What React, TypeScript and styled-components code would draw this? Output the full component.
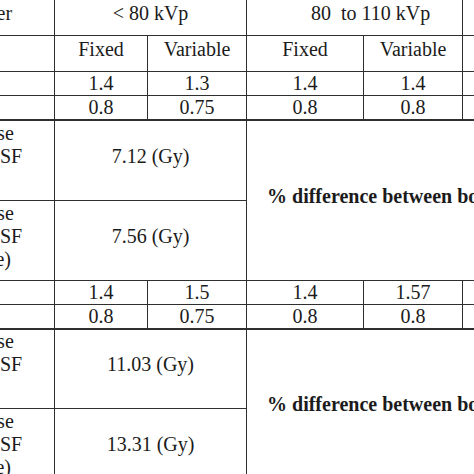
import React from 'react';
import styled, { createGlobalStyle } from 'styled-components';

const GlobalStyle = createGlobalStyle`
  html, body {
    margin: 0;
    padding: 0;
    background: #ffffff;
    overflow: hidden;
  }
`;

const Frame = styled.div`
  width: 474px;
  height: 474px;
  overflow: hidden;
  background: #ffffff;
`;

const Table = styled.table`
  border-collapse: collapse;
  table-layout: fixed;
  width: 736px;
  margin: -1px 0 0 -76px;
  font-family: "Liberation Serif", "Times New Roman", serif;
  font-size: 20px;
  color: #1b1b1b;
`;

const Cell = styled.td<{
  $h: number;
  $pb?: number;
  $top?: number;
  $align?: 'left' | 'center';
  $indent?: number;
  $bold?: boolean;
}>`
  border: 1px solid #2f2f2f;
  border-top-width: ${(p) => p.$top ?? 1}px;
  height: ${(p) => p.$h}px;
  box-sizing: border-box;
  padding: 0 0 ${(p) => p.$pb ?? 0}px ${(p) => p.$indent ?? 0}px;
  text-align: ${(p) => p.$align ?? 'center'};
  vertical-align: middle;
  line-height: 23px;
  white-space: pre;
  font-weight: ${(p) => (p.$bold ? 700 : 400)};
  overflow: hidden;
`;

const widths = [130, 93, 99, 117, 99, 99, 99];

const valueRows = [
  { label: 'α', h: 24, values: ['1.4', '1.3', '1.4', '1.4', '1.4', '1.5'] },
  { label: 'β', h: 23, values: ['0.8', '0.75', '0.8', '0.8', '0.8', '0.75'] },
];

const valueRows2 = [
  { label: 'α', h: 24, values: ['1.4', '1.5', '1.4', '1.57', '1.4', '1.6'] },
  { label: 'β', h: 24, values: ['0.8', '0.75', '0.8', '0.8', '0.8', '0.75'] },
];

const DIFF = '% difference between both techniques';

const Block: React.FC<{
  rows: typeof valueRows;
  fixedDose: string;
  variableDose: string;
  first?: boolean;
}> = ({ rows, fixedDose, variableDose }) => (
  <>
    {rows.map((r, i) => (
      <tr key={i}>
        <Cell $h={r.h} $align="left" $indent={6}>{r.label}</Cell>
        {r.values.map((v, j) => (
          <Cell key={j} $h={r.h}>{v}</Cell>
        ))}
      </tr>
    ))}
    <tr>
      <Cell $h={80} $pb={8} $top={2} $align="left" $indent={6}>
        {'Skin Dose\nby the GSF\n(Fixed)'}
      </Cell>
      <Cell $h={80} $pb={8} $top={2} colSpan={2}>{fixedDose}</Cell>
      <Cell $h={160} $pb={8} $top={2} colSpan={4} rowSpan={2} $align="left" $indent={20} $bold>
        {DIFF}
      </Cell>
    </tr>
    <tr>
      <Cell $h={80} $pb={8} $align="left" $indent={6}>
        {'Skin Dose\nby the GSF\n(Variable)'}
      </Cell>
      <Cell $h={80} $pb={8} colSpan={2}>{variableDose}</Cell>
    </tr>
  </>
);

export default function App() {
  return (
    <Frame>
      <GlobalStyle />
      <Table>
        <colgroup>
          {widths.map((w, i) => (
            <col key={i} style={{ width: w }} />
          ))}
        </colgroup>
        <tbody>
          <tr>
            <Cell $h={36} $pb={8} $align="left" $indent={6}>Parameter</Cell>
            <Cell $h={36} $pb={8} colSpan={2}>{'< 80 kVp'}</Cell>
            <Cell $h={36} $pb={8} colSpan={2} $indent={32}>{'80  to 110 kVp'}</Cell>
            <Cell $h={36} $pb={8} colSpan={2}>{'> 110 kVp'}</Cell>
          </tr>
          <tr>
            <Cell $h={36} $pb={8} />
            {['Fixed', 'Variable', 'Fixed', 'Variable', 'Fixed', 'Variable'].map((t, i) => (
              <Cell key={i} $h={36} $pb={8}>{t}</Cell>
            ))}
          </tr>
          <Block rows={valueRows} fixedDose="7.12 (Gy)" variableDose="7.56 (Gy)" />
          <Block rows={valueRows2} fixedDose="11.03 (Gy)" variableDose="13.31 (Gy)" />
        </tbody>
      </Table>
    </Frame>
  );
}
